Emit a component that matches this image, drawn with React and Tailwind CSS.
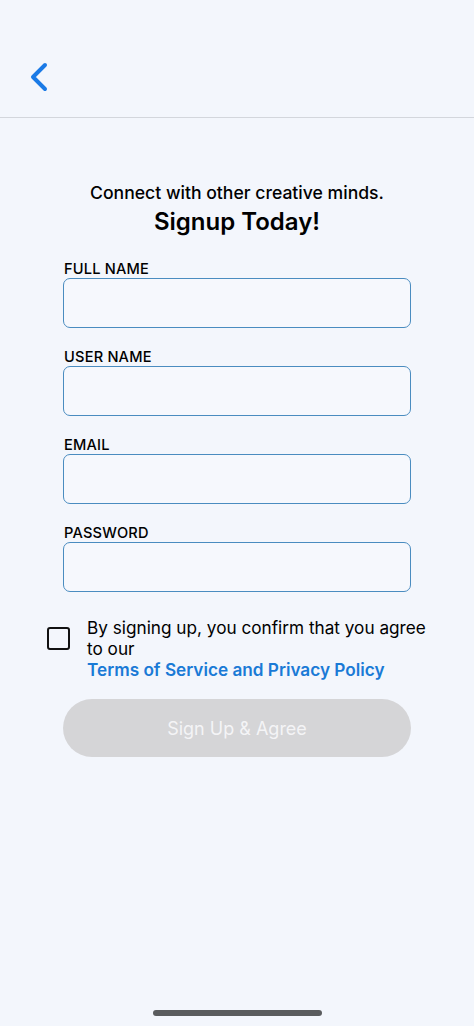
const fields = ["FULL NAME", "USER NAME", "EMAIL", "PASSWORD"];

export default function App() {
  return (
    <div
      className="relative flex min-h-[1026px] w-full flex-col bg-[#f3f6fc] text-black"
      style={{ fontFamily: "Inter, 'Noto Sans', sans-serif" }}
    >
      {/* header */}
      <div className="flex h-[118px] items-start border-b border-[#d3d6dc] pl-[28px] pt-[62px]">
        <svg width="22" height="30" viewBox="0 0 22 30" fill="none">
          <polyline
            points="17,3 5,15 17,27"
            stroke="#1a7ae6"
            strokeWidth="4"
            strokeLinecap="round"
            strokeLinejoin="round"
          />
        </svg>
      </div>

      <div className="flex flex-col items-center pt-[64px]">
        <p className="text-[17.6px] font-medium leading-[22px]">Connect with other creative minds.</p>
        <h1 className="mt-[3px] text-[24px] font-semibold leading-[30px]">Signup Today!</h1>
      </div>

      <div className="mx-[63px] mt-[25px] flex flex-col gap-[22px]">
        {fields.map((f) => (
          <div key={f} className="flex flex-col">
            <label className="pl-px text-[14.6px] font-medium leading-[15px] tracking-[0.2px]">{f}</label>
            <input
              type={f === "PASSWORD" ? "password" : "text"}
              className="mt-[1px] h-[50px] w-full rounded-[7px] border-[1.6px] border-[#4a8cc0] bg-[#f6f8fd] px-3 outline-none"
            />
          </div>
        ))}
      </div>

      <div className="mt-[25px] flex pl-[47px] pr-[40px]">
        <div className="mt-[10px] h-[23px] w-[23px] shrink-0 rounded-[3px] border-[2.5px] border-[#111]" />
        <div className="ml-[17px] text-[17.2px] leading-[21px]">
          <p>By signing up, you confirm that you agree to our</p>
          <p className="font-semibold text-[#1a7ad6]">Terms of Service and Privacy Policy</p>
        </div>
      </div>

      <div className="mx-[63px] mt-[19px]">
        <button className="h-[58px] w-full rounded-full bg-[#d5d5d7] text-[18px] text-[#f4f4f6]">
          Sign Up &amp; Agree
        </button>
      </div>

      <div className="absolute bottom-[10px] left-[153px] h-[6px] w-[169px] rounded-full bg-[#5a5c5e]" />
    </div>
  );
}
